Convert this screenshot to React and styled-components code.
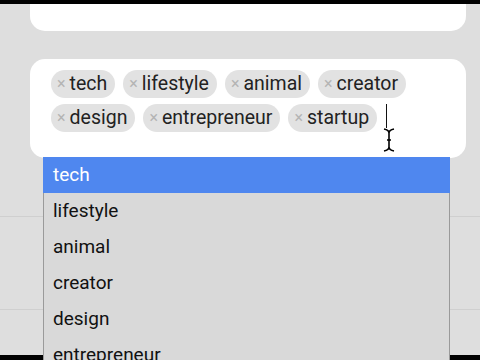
import React from 'react';
import styled, { createGlobalStyle } from 'styled-components';

const Global = createGlobalStyle`
    html, body { margin: 0; padding: 0; }
    body {
        background: #dedede;
        font-family: Roboto, "Liberation Sans", sans-serif;
    }
`;

const tags = ['tech', 'lifestyle', 'animal', 'creator', 'design', 'entrepreneur', 'startup'];

const Screen = styled.div`
    position: relative;
    width: 480px;
    height: 360px;
    overflow: hidden;
    background: #dedede;
    display: flex;
    flex-direction: column;
`;

const LetterBox = styled.div`
    height: ${p => p.h}px;
    background: #000;
    flex-shrink: 0;
`;

const Content = styled.div`
    flex: 1;
    display: flex;
    flex-direction: column;
    padding: 0 14px 0 30px;
`;

const PrevCard = styled.div`
    height: 27px;
    background: #fff;
    border-radius: 0 0 15px 15px;
`;

const TagCard = styled.div`
    margin-top: 28px;
    height: 99px;
    box-sizing: border-box;
    background: #fff;
    border-radius: 15px;
    padding: 11px 20px 0 21px;
    display: flex;
    flex-wrap: wrap;
    align-content: flex-start;
    gap: 6px 8px;
`;

const Chip = styled.span`
    display: inline-flex;
    align-items: center;
    height: 28px;
    padding: 0 8px 0 6px;
    border-radius: 14px;
    background: #e2e2e2;
    color: #222;
    font-size: 19.5px;
    line-height: 28px;
`;

const Remove = styled.span`
    color: #b4b4b4;
    font-size: 16px;
    margin-right: 4px;
    margin-top: -1px;
`;

const Caret = styled.span`
    width: 0;
    height: 24px;
    margin-left: 1px;
    border-left: 1.5px solid #111;
    align-self: flex-start;
`;

const Rows = styled.div`
    margin: 0 -14px 0 -30px;
    display: flex;
    flex-direction: column;
`;

const Row = styled.div`
    height: ${p => p.h}px;
    border-bottom: 1px solid #cfcfcf;
`;

const Dropdown = styled.ul`
    position: absolute;
    top: 157px;
    left: 43px;
    width: 407px;
    margin: 0;
    padding: 0;
    list-style: none;
    background: #d9d9d9;
    border-left: 1px solid #9a9a9a;
    border-right: 1px solid #9a9a9a;
    border-radius: 3px 3px 0 0;
    box-sizing: border-box;
`;

const Option = styled.li`
    height: 36px;
    line-height: 36px;
    font-size: 19px;
    color: ${p => (p.active ? '#fff' : '#111')};
    background: ${p => (p.active ? '#4f87ef' : 'transparent')};
    margin: ${p => (p.active ? '0 -1px' : '0')};
    padding-left: ${p => (p.active ? '10px' : '9px')};
`;

const Pointer = styled.svg`
    position: absolute;
    left: 382px;
    top: 128px;
`;

const App = () => (
    <Screen>
        <Global />
        <LetterBox h={4} />
        <Content>
            <PrevCard />
            <TagCard>
                {tags.map(t => (
                    <Chip key={t}>
                        <Remove>×</Remove>
                        {t}
                    </Chip>
                ))}
                <Caret />
            </TagCard>
            <Rows>
                <Row h={58} />
                <Row h={92} />
            </Rows>
        </Content>
        <LetterBox h={5} />
        <Dropdown>
            {tags.map((t, i) => (
                <Option key={t} active={i === 0}>{t}</Option>
            ))}
        </Dropdown>
        <Pointer width="14" height="24" viewBox="0 0 14 24">
            <path d="M2 1 Q7 2 7 5 Q7 2 12 1 M7 5 V19 M2 23 Q7 22 7 19 Q7 22 12 23 M5 12 H9"
                fill="none" stroke="#000" strokeWidth="1.6" />
        </Pointer>
    </Screen>
);

export default App;
